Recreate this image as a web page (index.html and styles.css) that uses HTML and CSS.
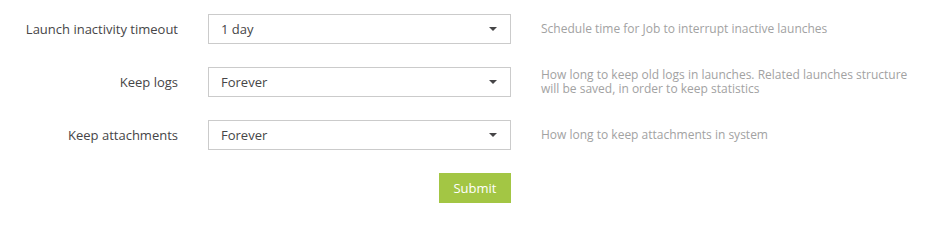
FILE: index.html
```html
<!DOCTYPE html>
<html lang="en">
<head>
  <meta charset="UTF-8">
  <title>General settings</title>
  <link rel="stylesheet" href="styles.css">
</head>
<body>
  <form class="settings" onsubmit="return false">
    <div class="row">
      <label class="label">Launch inactivity timeout</label>
      <div class="dropdown">
        <span class="value">1 day</span>
        <svg class="caret" width="8" height="4" viewBox="0 0 8 4"><path d="M0 0h8L4 4z"/></svg>
      </div>
      <div class="hint">Schedule time for Job to interrupt inactive launches</div>
    </div>

    <div class="row">
      <label class="label">Keep logs</label>
      <div class="dropdown">
        <span class="value">Forever</span>
        <svg class="caret" width="8" height="4" viewBox="0 0 8 4"><path d="M0 0h8L4 4z"/></svg>
      </div>
      <div class="hint">How long to keep old logs in launches. Related launches structure will be saved, in order to keep statistics</div>
    </div>

    <div class="row">
      <label class="label">Keep attachments</label>
      <div class="dropdown">
        <span class="value">Forever</span>
        <svg class="caret" width="8" height="4" viewBox="0 0 8 4"><path d="M0 0h8L4 4z"/></svg>
      </div>
      <div class="hint">How long to keep attachments in system</div>
    </div>

    <div class="row">
      <span></span>
      <button class="submit-btn" type="submit">Submit</button>
    </div>
  </form>
</body>
</html>
```

FILE: styles.css
```css
body {
  margin: 0;
  font-family: 'Open Sans', sans-serif;
  background: #fff;
  color: #464547;
}

.settings {
  display: flex;
  flex-direction: column;
  gap: 23px;
  padding-top: 14px;
}

.row {
  display: grid;
  grid-template-columns: 178px 303px 1fr;
  column-gap: 30px;
  align-items: center;
}

.label {
  text-align: right;
  font-size: 13px;
  color: #464547;
}

.dropdown {
  display: flex;
  justify-content: space-between;
  align-items: center;
  box-sizing: border-box;
  height: 30px;
  padding: 0 13px 0 12px;
  border: 1px solid #cbcbcb;
  font-size: 13px;
  color: #464547;
  cursor: pointer;
}

.caret {
  fill: #464547;
}

.hint {
  max-width: 372px;
  font-size: 12px;
  line-height: 14px;
  color: #a2a2a2;
}

.submit-btn {
  justify-self: end;
  width: 72px;
  height: 30px;
  border: none;
  background-color: #a3c644;
  color: #fff;
  font-family: 'Open Sans', sans-serif;
  font-size: 13px;
  cursor: pointer;
}
```
